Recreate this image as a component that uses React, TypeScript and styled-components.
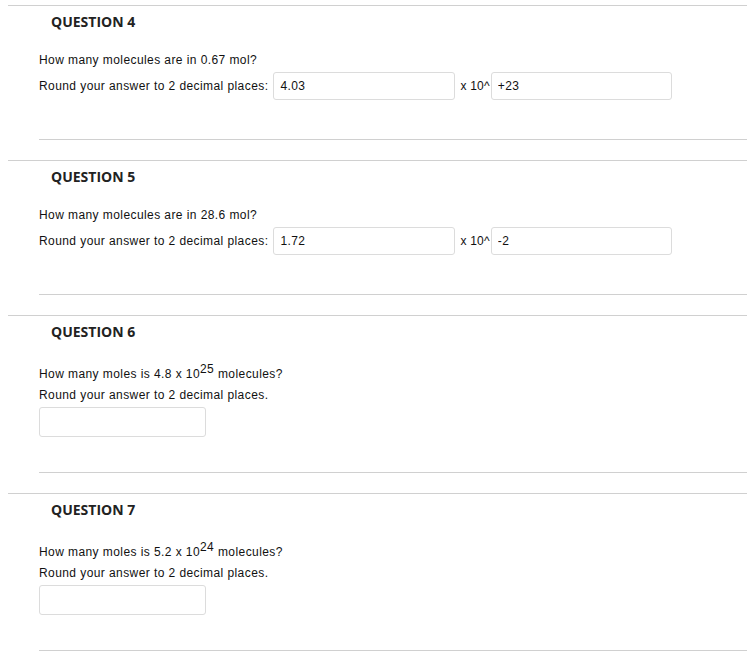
import React from "react";
import styled, { createGlobalStyle } from "styled-components";

const GlobalStyle = createGlobalStyle`
  html, body {
    margin: 0;
    padding: 0;
    background: #fff;
  }
  body {
    font-family: "Liberation Sans", Arial, sans-serif;
    font-size: 12px;
    letter-spacing: 0.42px;
    color: #111;
  }
`;

const Page = styled.div`
  padding-top: 5px;
  width: 747px;
`;

const Section = styled.section`
  margin-left: 8px;
  border-top: 1px solid #d0d0d0;
  padding-bottom: 20px;
`;

const Heading = styled.h3`
  margin: 0;
  padding: 8px 0 0 43px;
  font-family: "Open Sans", sans-serif;
  font-weight: 700;
  font-size: 14px;
  line-height: 16px;
  letter-spacing: 0;
  color: #222;
`;

const Body = styled.div<{ extraBottom?: boolean }>`
  margin-left: 31px;
  padding-top: 20px;
  padding-bottom: ${(p) => (p.extraBottom ? "40px" : "35px")};
  border-bottom: 1px solid #d0d0d0;
`;

const Line = styled.p<{ raised?: boolean }>`
  margin: ${(p) => (p.raised ? "4px 0 0" : "0")};
  line-height: 21px;
`;

const AnswerRow = styled.div`
  display: flex;
  align-items: center;
  margin-top: 1px;
  height: 27px;
`;

const Label = styled.span`
  margin-right: 5px;
  white-space: nowrap;
`;

const Times = styled.span`
  margin: 0 1px 0 5px;
  letter-spacing: 0.2px;
  white-space: nowrap;
`;

const Field = styled.input<{ w: number; h: number }>`
  box-sizing: border-box;
  width: ${(p) => p.w}px;
  height: ${(p) => p.h}px;
  border: 1px solid #dcdcdc;
  border-radius: 3px;
  padding: 0 6px;
  font-family: "Liberation Sans", Arial, sans-serif;
  font-size: 12px;
  letter-spacing: 0.42px;
  color: #111;
  background: #fff;
  outline: none;
`;

const BlockField = styled(Field)`
  display: block;
  margin-top: 1px;
`;

const Sup = styled.sup`
  font-size: 12px;
  line-height: 0;
  vertical-align: 5px;
`;

function SciQuestion({ num, text, mantissa, exponent }: { num: number; text: string; mantissa: string; exponent: string }) {
  return (
    <Section>
      <Heading>QUESTION {num}</Heading>
      <Body extraBottom>
        <Line>{text}</Line>
        <AnswerRow>
          <Label>Round your answer to 2 decimal places:</Label>
          <Field w={182} h={28} defaultValue={mantissa} />
          <Times>x 10^</Times>
          <Field w={181} h={28} defaultValue={exponent} />
        </AnswerRow>
      </Body>
    </Section>
  );
}

function MolesQuestion({ num, base, power }: { num: number; base: string; power: string }) {
  return (
    <Section>
      <Heading>QUESTION {num}</Heading>
      <Body>
        <Line raised>
          How many moles is {base} x 10<Sup>{power}</Sup> molecules?
        </Line>
        <Line>Round your answer to 2 decimal places.</Line>
        <BlockField w={167} h={30} />
      </Body>
    </Section>
  );
}

export default function App() {
  return (
    <Page>
      <GlobalStyle />
      <SciQuestion num={4} text="How many molecules are in 0.67 mol?" mantissa="4.03" exponent="+23" />
      <SciQuestion num={5} text="How many molecules are in 28.6 mol?" mantissa="1.72" exponent="-2" />
      <MolesQuestion num={6} base="4.8" power="25" />
      <MolesQuestion num={7} base="5.2" power="24" />
    </Page>
  );
}
